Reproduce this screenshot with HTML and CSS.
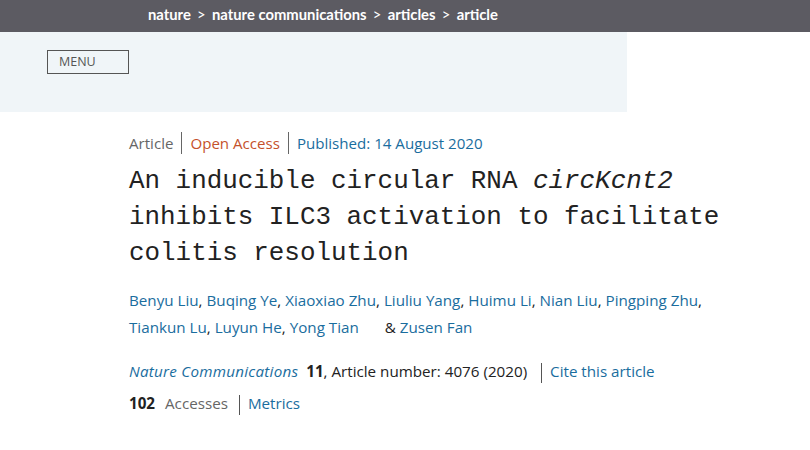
FILE: index.html
```html
<!DOCTYPE html>
<html>
<head>
<meta charset="utf-8">
<link rel="stylesheet" href="styles.css">
</head>
<body>
<header class="crumbs">
  <nav class="crumb-list">
    <span>nature</span><span class="sep">&gt;</span><span>nature communications</span><span class="sep">&gt;</span><span>articles</span><span class="sep">&gt;</span><span>article</span>
  </nav>
</header>
<div class="panel">
  <button class="menu">MENU</button>
</div>
<main class="article">
  <ul class="meta">
    <li class="gray">Article</li>
    <li class="orange">Open Access</li>
    <li class="blue">Published: 14 August 2020</li>
  </ul>
  <h1 class="title">An inducible circular RNA <i>circKcnt2</i> inhibits ILC3 activation to facilitate colitis resolution</h1>
  <p class="authors"><a>Benyu Liu</a>, <a>Buqing Ye</a>, <a>Xiaoxiao Zhu</a>, <a>Liuliu Yang</a>, <a>Huimu Li</a>, <a>Nian Liu</a>, <a>Pingping Zhu</a>,<br><a>Tiankun Lu</a>, <a>Luyun He</a>, <a>Yong Tian</a> <span class="amp">&amp;</span> <a>Zusen Fan</a></p>
  <p class="journal"><i class="blue">Nature Communications</i> <b>11</b>, Article number: 4076 (2020) <span class="bar"></span><a>Cite this article</a></p>
  <p class="access"><b>102</b> <span class="gray">Accesses</span> <span class="bar"></span><a>Metrics</a></p>
</main>
</body>
</html>
```
FILE: styles.css
```css
html, body { margin: 0; padding: 0; background: #fff; }
body { font-family: "Open Sans", "Noto Sans", sans-serif; color: #222; }
.crumbs { background: #5c5b62; height: 32px; display: flex; align-items: center; }
.crumb-list { margin-left: 148px; margin-top: -4px; color: #fff; font-family: Lato, sans-serif; font-weight: 700; font-size: 14.8px; display: flex; gap: 6.3px; }
.crumb-list .sep { font-weight: 400; }
.panel { background: #f0f5f8; width: 627px; height: 80px; box-sizing: border-box; padding: 17px 0 0 47px; }
.menu { background: transparent; border: 1px solid #555; width: 82px; height: 24px; font-family: "Open Sans", sans-serif; font-size: 12.5px; color: #555; padding: 0 0 0 11px; text-align: left; line-height: 20px; }
.article { padding-left: 129px; padding-top: 20px; }
.meta { list-style: none; margin: 0; padding: 0; display: flex; font-size: 15.1px; line-height: 22px; }
.meta li { padding: 0 8px; border-left: 1px solid #666; }
.meta li:first-child { padding-left: 0; border-left: none; }
.gray { color: #666; }
.orange { color: #c5512a; }
.blue { color: #1a6d9e; }
.title { font-family: "Liberation Mono", monospace; font-weight: 400; font-size: 25.9px; line-height: 36px; margin: 9px 0 0 0; width: 610px; color: #222; }
.title i { font-style: italic; }
.authors { font-size: 15.2px; line-height: 27px; margin: 16px 0 0 0; color: #222; }
.authors a { color: #1a6d9e; }
.amp { margin-left: 22px; }
.journal { font-size: 15.2px; line-height: 22px; margin: 19px 0 0 0; }
.journal i { letter-spacing: 0.25px; }
.journal b, .access b { font-weight: 700; }
.journal b { margin-left: 4px; }
.bar { display: inline-block; width: 1px; height: 20px; background: #555; vertical-align: middle; margin: 0 8px 0 10px; }
a { color: #1a6d9e; }
.access { font-size: 15.2px; line-height: 22px; margin: 9px 0 0 0; }
.access .gray { margin-left: 6px; }
.access .bar { margin-left: 7px; }
```
